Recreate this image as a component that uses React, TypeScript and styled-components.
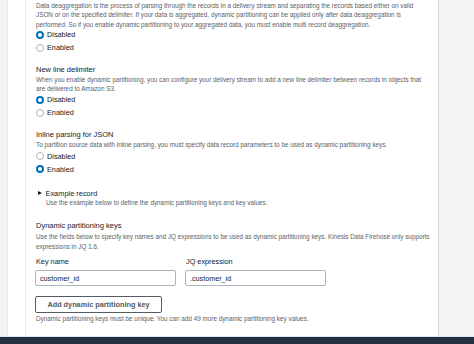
import styled, { createGlobalStyle } from 'styled-components';

const GlobalStyle = createGlobalStyle`
    html, body {
        margin: 0;
        padding: 0;
        background: #ffffff;
    }
    body {
        font-family: "Liberation Sans", Arial, sans-serif;
        color: #16191f;
    }
`;

const Radio = ({ checked, label }: { checked?: boolean; label: string }) => (
    <RadioRow>
        <RadioDot $checked={checked} />
        <span>{label}</span>
    </RadioRow>
);

const App = () => {
    return (
        <Page>
            <GlobalStyle />
            <Main>
                <Rail />
                <Gutter />
                <Content>
                    <Section>
                        <Description>
                            Data deaggregation is the process of parsing through the records in a delivery stream and separating the records based either on valid
                            <br />
                            JSON or on the specified delimiter. If your data is aggregated, dynamic partitioning can be applied only after data deaggregation is
                            <br />
                            performed. So if you enable dynamic partitioning to your aggregated data, you must enable multi record deaggregation.
                        </Description>
                        <RadioGroup>
                            <Radio checked label="Disabled" />
                            <Radio label="Enabled" />
                        </RadioGroup>
                    </Section>

                    <Section $top={11.5}>
                        <Heading>New line delimiter</Heading>
                        <Description>
                            When you enable dynamic partitioning, you can configure your delivery stream to add a new line delimiter between records in objects that
                            <br />
                            are delivered to Amazon S3.
                        </Description>
                        <RadioGroup $top={0.75}>
                            <Radio checked label="Disabled" />
                            <Radio label="Enabled" />
                        </RadioGroup>
                    </Section>

                    <Section $top={11.5}>
                        <Heading>Inline parsing for JSON</Heading>
                        <Description>
                            To partition source data with inline parsing, you must specify data record parameters to be used as dynamic partitioning keys.
                        </Description>
                        <RadioGroup $top={1.5}>
                            <Radio label="Disabled" />
                            <Radio checked label="Enabled" />
                        </RadioGroup>
                    </Section>

                    <Section $top={13.5}>
                        <Expander>
                            <Caret />
                            <span>Example record</span>
                        </Expander>
                        <ExpanderBody>
                            Use the example below to define the dynamic partitioning keys and key values.
                        </ExpanderBody>
                    </Section>

                    <Section $top={13.25}>
                        <Heading>Dynamic partitioning keys</Heading>
                        <Description $top={1.25}>
                            Use the fields below to specify key names and JQ expressions to be used as dynamic partitioning keys. Kinesis Data Firehose only supports
                            <br />
                            expressions in JQ 1.6.
                        </Description>
                        <FieldRow>
                            <Field>
                                <FieldLabel>Key name</FieldLabel>
                                <Input type="text" defaultValue="customer_id" />
                            </Field>
                            <Field>
                                <FieldLabel>JQ expression</FieldLabel>
                                <Input type="text" defaultValue=".customer_id" />
                            </Field>
                        </FieldRow>
                        <AddButton>Add dynamic partitioning key</AddButton>
                        <Hint>
                            Dynamic partitioning keys must be unique. You can add 49 more dynamic partitioning key values.
                        </Hint>
                    </Section>
                </Content>
                <SidePanel />
            </Main>
            <Footer />
        </Page>
    );
};

const Page = styled.div`
    width: 474px;
    height: 344px;
    display: flex;
    flex-direction: column;
    overflow: hidden;
`;

const Main = styled.div`
    flex: 1;
    min-height: 0;
    display: flex;
`;

const Rail = styled.div`
    width: 7px;
    background: #f2f3f3;
    border-right: 1px solid #e4e7e7;
`;

const Gutter = styled.div`
    width: 17px;
    background: #ffffff;
    border-right: 1px solid #eaeded;
`;

const Content = styled.main`
    flex: 1;
    min-width: 0;
    padding: 0.5px 10px 0 10px;
    display: flex;
    flex-direction: column;
    overflow: hidden;
`;

const SidePanel = styled.aside`
    width: 35px;
    background: #f2f3f3;
    border-left: 1px solid #d5dbdb;
`;

const Footer = styled.footer`
    height: 7px;
    background: #232f3e;
    border-top: 1px solid #dde5ec;
`;

const Section = styled.section<{ $top?: number }>`
    display: flex;
    flex-direction: column;
    margin-top: ${({ $top }) => $top ?? 0}px;
`;

const Heading = styled.div`
    font-size: 7.5px;
    line-height: 10px;
    color: #16191f;
    white-space: nowrap;
`;

const Description = styled.div<{ $top?: number }>`
    font-size: 6.35px;
    line-height: 9.5px;
    color: #5a6168;
    white-space: nowrap;
    margin-top: ${({ $top }) => $top ?? 0}px;
`;

const RadioGroup = styled.div<{ $top?: number }>`
    display: flex;
    flex-direction: column;
    gap: 2px;
    margin-top: ${({ $top }) => $top ?? 0}px;
`;

const RadioRow = styled.label`
    display: flex;
    align-items: center;
    gap: 3px;
    height: 11px;
    font-size: 7.3px;
    color: #16191f;
`;

const RadioDot = styled.span<{ $checked?: boolean }>`
    box-sizing: border-box;
    width: 8px;
    height: 8px;
    border-radius: 50%;
    background: #ffffff;
    border: ${({ $checked }) => ($checked ? '2.5px solid #0073bb' : '1px solid #aab7b8')};
`;

const Expander = styled.div`
    display: flex;
    align-items: center;
    gap: 4px;
    height: 10px;
    padding-left: 1.5px;
    font-size: 7.4px;
    color: #16191f;
`;

const Caret = styled.span`
    width: 0;
    height: 0;
    border-left: 4.5px solid #16191f;
    border-top: 2.5px solid transparent;
    border-bottom: 2.5px solid transparent;
`;

const ExpanderBody = styled(Description)`
    padding-left: 10px;
`;

const FieldRow = styled.div`
    display: grid;
    grid-template-columns: 141px 141px;
    gap: 9px;
    margin-top: 6px;
    margin-left: -1px;
`;

const Field = styled.div`
    display: flex;
    flex-direction: column;
`;

const FieldLabel = styled.div`
    font-size: 7.3px;
    line-height: 10px;
    padding-left: 1px;
    color: #16191f;
`;

const Input = styled.input`
    box-sizing: border-box;
    margin: 3px 0 0 0;
    height: 16px;
    width: 100%;
    padding: 0 4px;
    border: 1px solid #aab7b8;
    border-radius: 2px;
    font-family: inherit;
    font-size: 7.2px;
    color: #16191f;
    background: #ffffff;
    &:focus {
        outline: none;
    }
`;

const AddButton = styled.button`
    box-sizing: border-box;
    align-self: flex-start;
    margin: 10px 0 0 -1px;
    width: 127px;
    height: 17px;
    padding: 0;
    border: 1px solid #545b64;
    border-radius: 2px;
    background: #ffffff;
    font-family: inherit;
    font-size: 7.3px;
    font-weight: 700;
    color: #545b64;
`;

const Hint = styled(Description)`
    margin-top: 1px;
`;

export default App;
